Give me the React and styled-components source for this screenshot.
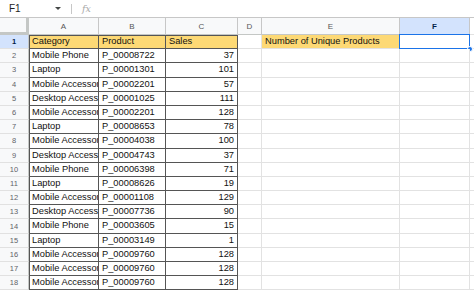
import styled, { createGlobalStyle } from "styled-components";

const GlobalStyle = createGlobalStyle`
  html, body {
    margin: 0;
    padding: 0;
    background: #ffffff;
    overflow: hidden;
  }
  body {
    font-family: "Liberation Sans", Arial, sans-serif;
  }
`;

const COLS = ["A", "B", "C", "D", "E", "F"];
const ROW_H = 14.2;

const rows = [
  ["Mobile Phone", "P_00008722", 37],
  ["Laptop", "P_00001301", 101],
  ["Mobile Accessories", "P_00002201", 57],
  ["Desktop Accessories", "P_00001025", 111],
  ["Mobile Accessories", "P_00002201", 128],
  ["Laptop", "P_00008653", 78],
  ["Mobile Accessories", "P_00004038", 100],
  ["Desktop Accessories", "P_00004743", 37],
  ["Mobile Phone", "P_00006398", 71],
  ["Laptop", "P_00008626", 19],
  ["Mobile Accessories", "P_00001108", 129],
  ["Desktop Accessories", "P_00007736", 90],
  ["Mobile Phone", "P_00003605", 15],
  ["Laptop", "P_00003149", 1],
  ["Mobile Accessories", "P_00009760", 128],
  ["Mobile Accessories", "P_00009760", 128],
  ["Mobile Accessories", "P_00009760", 128],
];

const Page = styled.div`
  width: 474px;
  height: 295px;
  overflow: hidden;
  background: #fff;
`;

const FormulaBar = styled.div`
  height: 17px;
  display: flex;
  align-items: center;
  border-bottom: 1px solid #c7c7c7;
  font-size: 10px;
  color: #1f1f1f;
`;

const NameBox = styled.div`
  width: 72px;
  display: flex;
  align-items: center;
  justify-content: space-between;
  padding: 0 10px 0 9px;
  box-sizing: border-box;
  border-right: 1px solid #c7c7c7;
  height: 10px;
`;

const Caret = styled.span`
  width: 0;
  height: 0;
  border-left: 3px solid transparent;
  border-right: 3px solid transparent;
  border-top: 3px solid #444746;
`;

const Fx = styled.span`
  margin-left: 10px;
  font-family: "DejaVu Serif", serif;
  font-style: italic;
  font-size: 9.5px;
  color: #a8a8a8;
`;

const Sheet = styled.div`
  display: grid;
  grid-template-columns: 29px 70px 67px 72px 24px 138px 70px 4px;
  grid-template-rows: 17px repeat(18, ${ROW_H}px);
`;

const Corner = styled.div`
  background: #f8f9fa;
  border-right: 3px solid #c4c7c5;
  border-bottom: 3px solid #c4c7c5;
  box-sizing: border-box;
`;

const ColHead = styled.div`
  background: ${(p) => (p.$active ? "#d3e3fd" : "#f8f9fa")};
  border-right: 1px solid #c7c7c7;
  border-bottom: 1px solid #c4c7c5;
  box-sizing: border-box;
  display: flex;
  align-items: center;
  justify-content: center;
  font-size: 8px;
  color: ${(p) => (p.$active ? "#041e49" : "#575757")};
  font-weight: ${(p) => (p.$active ? 700 : 400)};
  padding-top: 1px;
`;

const RowHead = styled.div`
  background: ${(p) => (p.$active ? "#d3e3fd" : "#f8f9fa")};
  border-right: 1px solid #c4c7c5;
  border-bottom: 1px solid #e1e1e1;
  box-sizing: border-box;
  display: flex;
  align-items: center;
  justify-content: center;
  font-size: 7.5px;
  color: ${(p) => (p.$active ? "#041e49" : "#5f6368")};
  font-weight: ${(p) => (p.$active ? 700 : 400)};
`;

const Cell = styled.div`
  position: relative;
  box-sizing: border-box;
  background: ${(p) => (p.$fill ? "#fdd975" : "#fff")};
  border-right: 1px solid ${(p) => (p.$boxed ? "#555" : "#e2e2e2")};
  border-bottom: 1px solid ${(p) => (p.$boxed ? "#555" : "#e2e2e2")};
  box-shadow: ${(p) => p.$edge || "none"};
  font-size: 9.3px;
  line-height: ${ROW_H - 1}px;
  color: #111;
  padding: 0 3px;
  white-space: nowrap;
  overflow: hidden;
  text-align: ${(p) => (p.$right ? "right" : "left")};
  z-index: ${(p) => (p.$overflow ? 1 : 0)};
  ${(p) => p.$overflow && "overflow: visible;"}
`;

const Selection = styled.div`
  position: relative;
  box-sizing: border-box;
  background: #fff;
  border: 1.5px solid #1a73e8;
  margin: -1px 0 0 -1px;
  &::after {
    content: "";
    position: absolute;
    right: -4px;
    bottom: -4px;
    width: 6px;
    height: 6px;
    border-radius: 50%;
    background: #1a73e8;
    border: 1px solid #fff;
    box-sizing: border-box;
  }
`;

const Spacer = styled.div`
  border-bottom: 1px solid #e2e2e2;
  box-sizing: border-box;
`;

function edgeFor(col, row) {
  const parts = [];
  if (col === 0) parts.push("inset 1px 0 0 #555");
  if (row === 0) parts.push("inset 0 1px 0 #555");
  return parts.length ? parts.join(", ") : undefined;
}

export default function App() {
  const header = ["Category", "Product", "Sales"];
  return (
    <Page>
      <GlobalStyle />
      <FormulaBar>
        <NameBox>
          <span>F1</span>
          <Caret />
        </NameBox>
        <Fx>fx</Fx>
      </FormulaBar>
      <Sheet>
        <Corner />
        {COLS.map((c) => (
          <ColHead key={c} $active={c === "F"}>
            {c}
          </ColHead>
        ))}
        <Spacer />

        {/* row 1 */}
        <RowHead $active>1</RowHead>
        {header.map((h, i) => (
          <Cell key={h} $boxed $fill $edge={edgeFor(i, 0)}>
            {h}
          </Cell>
        ))}
        <Cell />
        <Cell $fill>Number of Unique Products</Cell>
        <Selection />
        <Spacer />

        {rows.map((r, idx) => (
          <RowGroup key={idx} n={idx + 2} row={r} />
        ))}
      </Sheet>
    </Page>
  );
}

function RowGroup({ n, row }) {
  return (
    <>
      <RowHead>{n}</RowHead>
      <Cell $boxed $edge={edgeFor(0, n - 1)}>
        {row[0]}
      </Cell>
      <Cell $boxed>{row[1]}</Cell>
      <Cell $boxed $right>
        {row[2]}
      </Cell>
      <Cell />
      <Cell />
      <Cell />
      <Spacer />
    </>
  );
}
